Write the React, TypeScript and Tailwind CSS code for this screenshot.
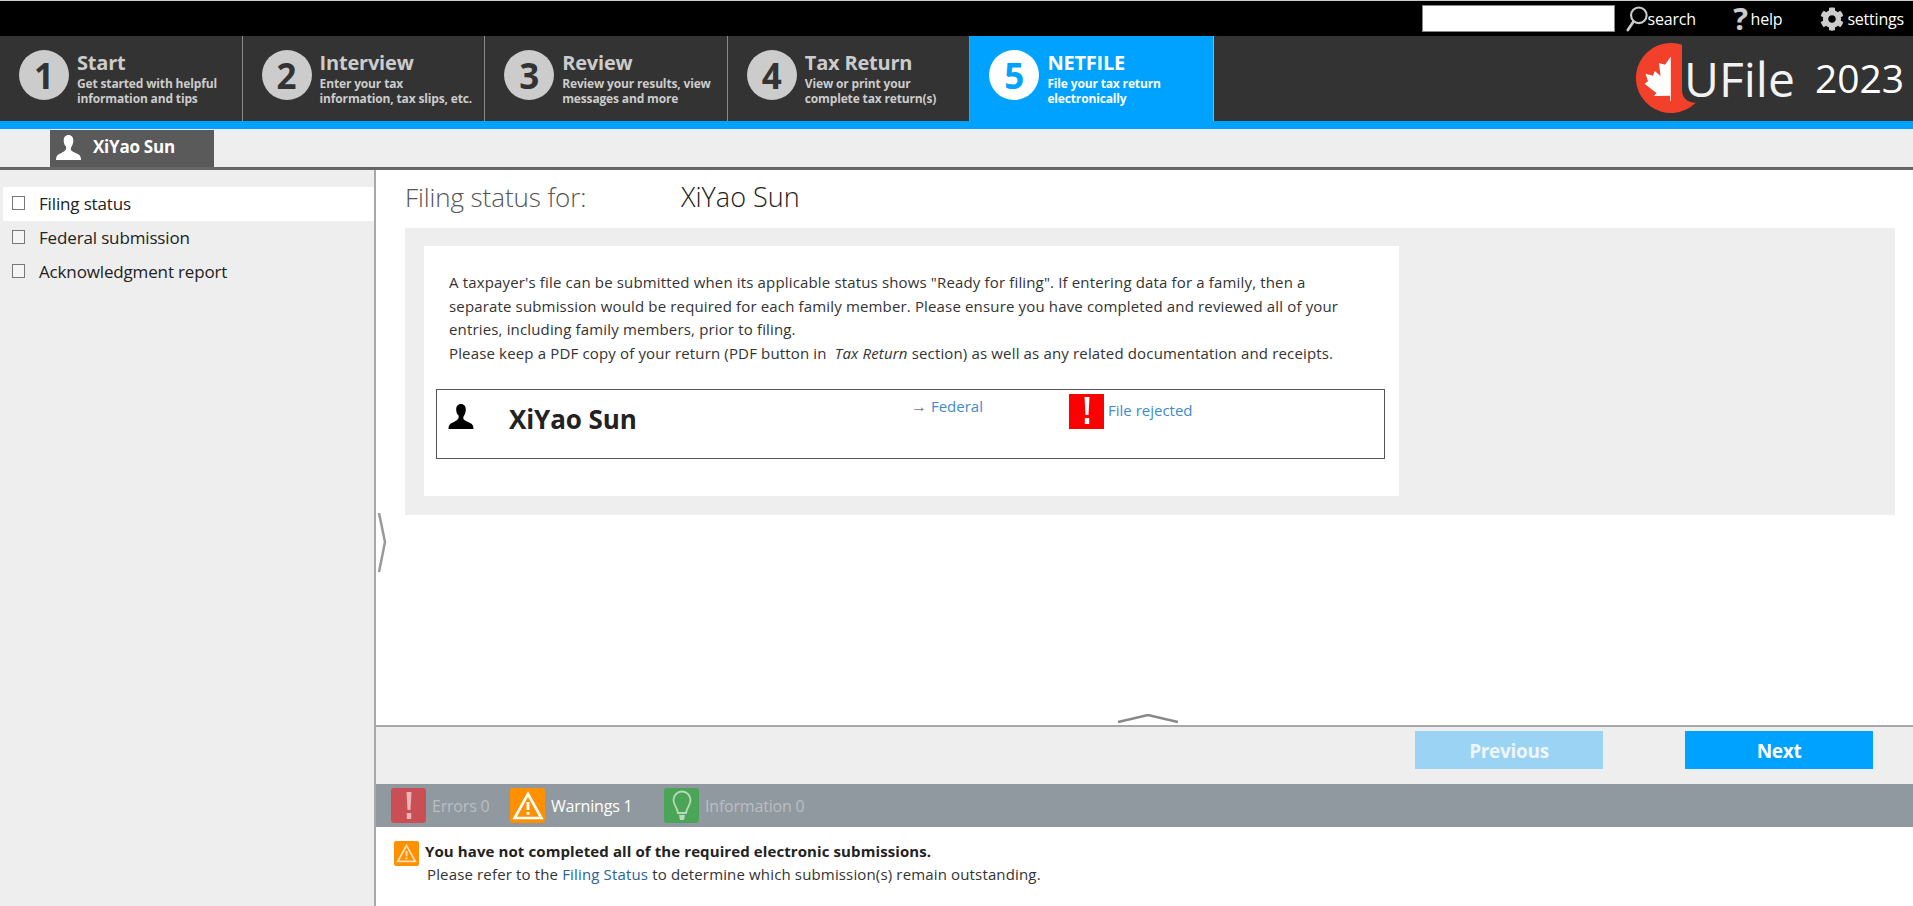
import React from "react";
import { FaCog } from "react-icons/fa";

const steps = [
  { n: "1", title: "Start", a: "Get started with helpful", b: "information and tips" },
  { n: "2", title: "Interview", a: "Enter your tax", b: "information, tax slips, etc." },
  { n: "3", title: "Review", a: "Review your results, view", b: "messages and more" },
  { n: "4", title: "Tax Return", a: "View or print your", b: "complete tax return(s)" },
];

function Person({ className, color }: { className: string; color: string }) {
  return (
    <svg viewBox="0 0 26 26" className={className} fill={color}>
      <path d="M13 0c-3.200 0-5 2.400-5 5.600 0 2.600.9 4.800 2.200 6.200.5.6.5 2.300.1 3.100C9.400 17.400 5.500 18.600 3 20c-1.800 1-3 2.400-3 6h26c0-3.600-1.200-5-3-6-2.500-1.400-6.400-2.600-7.300-4.100-.4-.8-.4-2.500.1-3.100C17.100 10.400 18 8.200 18 5.600 18 2.400 16.200 0 13 0z" />
    </svg>
  );
}

function Warn({ className, stroke }: { className: string; stroke: string }) {
  return (
    <svg viewBox="0 0 24 24" className={className} fill="none" stroke={stroke} strokeWidth="2" strokeLinejoin="miter">
      <path d="M12 3 L22 21 H2 Z" />
      <path d="M12 9v6M12 16.500v2" strokeWidth="2.200" />
    </svg>
  );
}

function Step({ n, title, a, b }: { n: string; title: string; a: string; b: string }) {
  return (
    <div className="w-[242.6px] h-full flex border-r border-[#8a8a8a] pl-[19px] pt-[14px] shrink-0">
      <div className="w-[50px] h-[50px] rounded-full bg-[#cccccc] text-[#333333] flex items-center justify-center text-[35px] font-bold leading-none shrink-0">{n}</div>
      <div className="ml-[8px] text-[#cccccc]">
        <div className="text-[20px] font-bold leading-[26px] tracking-[-0.2px]">{title}</div>
        <div className="text-[12px] font-bold leading-[15px] tracking-[-0.15px]">{a}</div>
        <div className="text-[12px] font-bold leading-[15px] tracking-[-0.15px]">{b}</div>
      </div>
    </div>
  );
}

export default function App() {
  return (
    <div className="w-[1913px] h-[906px] overflow-hidden flex flex-col bg-white font-['Open_Sans','Liberation_Sans',sans-serif] text-[#333333]">
      {/* top utility bar */}
      <div className="h-[36px] shrink-0 bg-black border-t border-[#cccccc] flex items-center justify-end pr-[9px] text-white text-[16px]">
        <div className="w-[193px] h-[27px] bg-white border border-[#888888]" />
        <svg viewBox="0 0 24 28" className="ml-[11px] w-[22px] h-[28px]" fill="none" stroke="#cccccc" strokeWidth="2.300">
          <circle cx="14" cy="10" r="8.500" />
          <path d="M8 17 L2 26" strokeWidth="3" strokeLinecap="round" />
        </svg>
        <span className="w-[47px] text-right tracking-[-0.2px]">search</span>
        <span className="ml-[37px] w-[18px] text-center text-[#cccccc] text-[31px] font-bold leading-[35px]">?</span>
        <span className="ml-[1px] tracking-[-0.2px]">help</span>
        <FaCog className="ml-[38px] text-[#cccccc] text-[24px]" />
        <span className="ml-[3px] tracking-[-0.2px]">settings</span>
      </div>

      {/* step bar */}
      <div className="h-[85px] shrink-0 bg-[#333333] flex relative">
        {steps.map((s) => (
          <Step key={s.n} {...s} />
        ))}
        <div className="w-[243.600px] h-full flex bg-[#00a2ff] border-r border-[#aaaaaa] pl-[19px] pt-[14px] shrink-0 text-white">
          <div className="w-[50px] h-[50px] rounded-full bg-white text-[#00a2ff] flex items-center justify-center text-[35px] font-bold leading-none shrink-0">5</div>
          <div className="ml-[8px]">
            <div className="text-[20px] font-bold leading-[26px] tracking-[-0.2px]">NETFILE</div>
            <div className="text-[12px] font-bold leading-[15px] tracking-[-0.15px]">File your tax return</div>
            <div className="text-[12px] font-bold leading-[15px] tracking-[-0.15px]">electronically</div>
          </div>
        </div>
        <div className="flex-1 flex items-start">
          <svg viewBox="0 0 60 71" className="ml-[422px] mt-[7px] w-[60px] h-[71px] shrink-0">
            <path d="M46 1.800A35 35 0 1 0 59.700 59.700C52 60 46 55 46 47Z" fill="#f2402b" />
            <path d="M34.400 14 29 21.700 23 20 24.500 33 18.700 28 17 32.700 9.500 30.700 12 38.300 8.500 40.700 20.400 50 18 53 34 52.700V58H34.800V14Z" fill="#ffffff" />
          </svg>
          <span className="-ml-[12px] mt-[13px] text-[48px] font-medium leading-[60px] text-[#f2f2f2]">UFile</span>
          <span className="ml-[20px] mt-[14px] text-[39px] font-medium leading-[56px] text-white">2023</span>
        </div>
      </div>
      <div className="h-[8px] shrink-0 bg-[#00a2ff]" />

      {/* person tab */}
      <div className="h-[38px] shrink-0 bg-[#eeeeee] pl-[50px] pt-[1px]">
        <div className="w-[164px] h-full bg-[#5a5a5a] flex items-center pl-[6px] text-white">
          <Person className="w-[25px] h-[25px] mb-[2px]" color="#ffffff" />
          <span className="ml-[12px] text-[17px] font-bold tracking-[-0.25px] mb-[3px]">XiYao Sun</span>
        </div>
      </div>
      <div className="h-[3px] shrink-0 bg-[#666666]" />

      {/* main */}
      <div className="flex-1 flex min-h-0">
        <aside className="w-[376px] shrink-0 bg-[#eeeeee] border-r-2 border-[#a8a8a8] pt-[17px] text-[17px] text-[#222222]">
          {["Filing status", "Federal submission", "Acknowledgment report"].map((t, i) => (
            <div key={t} className={`h-[34px] flex items-center ml-[3px] pl-[9px] ${i === 0 ? "bg-white" : ""}`}>
              <span className="w-[13px] h-[14px] border border-[#777777] bg-white/40 shrink-0 mb-[2px]" />
              <span className="ml-[14px] tracking-[-0.15px]">{t}</span>
            </div>
          ))}
        </aside>

        <div className="flex-1 flex flex-col min-w-0">
          <div className="h-[555px] shrink-0 relative">
            {/* handles over the content */}
            <svg viewBox="0 0 10 60" className="absolute left-[1px] top-[343px] w-[10px] h-[60px]" fill="none" stroke="#999999" strokeWidth="2.500">
              <path d="M2 0 L8 29 L2 59" />
            </svg>
            <svg viewBox="0 0 60 10" className="absolute left-[742px] bottom-[1px] w-[60px] h-[10px]" fill="none" stroke="#888888" strokeWidth="2.500">
              <path d="M0 8 L30 1 L60 8" />
            </svg>

            <div className="h-[58px] flex items-center pl-[29px] pb-[4px]">
              <span className="w-[276px] text-[26px] font-light tracking-[-0.1px] text-[#555555]">Filing status for:</span>
              <span className="text-[27px] font-light text-[#222222]">XiYao Sun</span>
            </div>

            <div className="ml-[29px] mr-[18px] h-[287px] bg-[#eeeeee] pt-[18px] pl-[19px]">
              <div className="w-[975px] h-[250px] bg-white pt-[25px] pl-[12px] pr-[14px]">
                <div className="pl-[13px] text-[15px] leading-[23.700px] text-[#333333] tracking-[0.155px]">
                  <div>A taxpayer's file can be submitted when its applicable status shows "Ready for filing". If entering data for a family, then a</div>
                  <div>separate submission would be required for each family member. Please ensure you have completed and reviewed all of your</div>
                  <div>entries, including family members, prior to filing.</div>
                  <div>Please keep a PDF copy of your return (PDF button in&nbsp; <em>Tax Return</em> section) as well as any related documentation and receipts.</div>
                </div>
                <div className="mt-[23px] h-[70px] border border-[#555555] flex items-start">
                  <Person className="ml-[11px] mt-[14px] w-[26px] h-[25px] shrink-0" color="#000000" />
                  <span className="ml-[35px] mt-[11px] w-[402px] text-[26px] font-bold leading-[36px] tracking-[-0.1px] text-[#222222]">XiYao Sun</span>
                  <span className="mt-[6px] w-[158px] text-[15px] leading-[20px] text-[#428bca]"><span className="text-[#777777] text-[16px]">→</span> Federal</span>
                  <span className="mt-[4px] w-[35px] h-[35px] bg-[#ff0000] flex items-center justify-center shrink-0">
                    <svg viewBox="0 0 8 28" className="w-[8px] h-[28px]" fill="#ffffff"><path d="M1.500 0h5L5.500 18h-3zM1.800 21h4.400v6H1.800z" /></svg>
                  </span>
                  <span className="ml-[4px] mt-[10px] text-[15px] leading-[20px] text-[#428bca]">File rejected</span>
                </div>
              </div>
            </div>
          </div>

          {/* nav */}
          <div className="h-[59px] shrink-0 bg-[#eeeeee] border-t-2 border-[#a8a8a8] flex justify-end items-start pt-[4px] pr-[40px] text-[19px] font-bold text-white">
            <div className="w-[188px] h-[38px] bg-[#9bd3f5] flex items-center justify-center text-[#eef6fb] tracking-[-0.3px] pt-[2px]">Previous</div>
            <div className="ml-[82px] w-[188px] h-[38px] bg-[#00a2ff] flex items-center justify-center tracking-[-0.3px] pt-[2px]">Next</div>
          </div>

          {/* message bar */}
          <div className="h-[43px] shrink-0 bg-[#9199a0] flex items-center pl-[15px] text-[16px] tracking-[-0.2px]">
            <div className="w-[35px] h-[35px] rounded-[3px] bg-[#c94f54] flex items-center justify-center">
              <svg viewBox="0 0 8 28" className="w-[8px] h-[28px]" fill="#e6b6b8"><path d="M1.500 0h5L5.500 18h-3zM1.800 21h4.400v6H1.800z" /></svg>
            </div>
            <span className="ml-[6px] w-[78px] text-[#b9bec3]">Errors 0</span>
            <div className="w-[35px] h-[35px] rounded-[3px] bg-[#ff9100] flex items-center justify-center">
              <Warn className="w-[32px] h-[32px]" stroke="#ffffff" />
            </div>
            <span className="ml-[6px] w-[113px] text-white">Warnings 1</span>
            <div className="w-[35px] h-[35px] rounded-[3px] bg-[#4aa557] flex items-center justify-center">
              <svg viewBox="0 0 20 32" className="w-[20px] h-[32px]" fill="none" stroke="#b9d8bd" strokeWidth="1.800">
                <path d="M6 23C5 17 1.500 15 1.500 10a8.500 8.500 0 0 1 17 0c0 5-3.500 7-4.500 13z" />
                <path d="M7 25h6l-1 5H8z" fill="#b9d8bd" stroke="none" />
              </svg>
            </div>
            <span className="ml-[6px] text-[#b9bec3]">Information 0</span>
          </div>

          {/* message */}
          <div className="flex-1 pt-[14px] pl-[18px] flex items-start text-[15px] text-[#333333]">
            <div className="w-[25px] h-[25px] rounded-[2px] bg-[#ff9100] flex items-center justify-center shrink-0">
              <Warn className="w-[21px] h-[21px]" stroke="#ffe0b8" />
            </div>
            <div className="ml-[6px] -mt-[1px] leading-[23px]">
              <div className="font-bold text-[#222222] tracking-[0.1px]">You have not completed all of the required electronic submissions.</div>
              <div className="ml-[2px] tracking-[0.15px]">Please refer to the <span className="text-[#2a6496]">Filing Status</span> to determine which submission(s) remain outstanding.</div>
            </div>
          </div>
        </div>
      </div>
    </div>
  );
}
